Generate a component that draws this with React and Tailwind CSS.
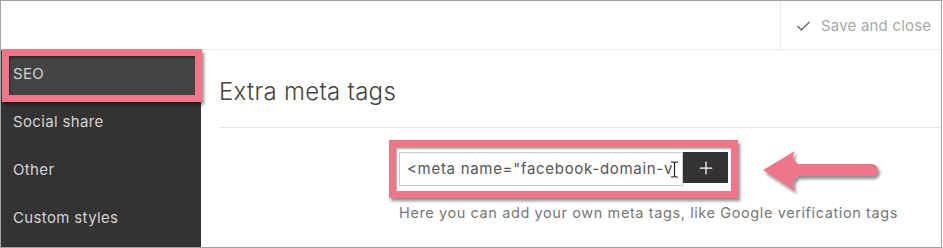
import { Check, Plus } from "lucide-react";

const MENU = ["SEO", "Social share", "Other", "Custom styles"];

function Arrow() {
  return (
    <svg width="124" height="50" viewBox="0 0 124 50" className="absolute left-[760px] top-[148px]">
      <defs>
        <filter id="sh" x="-10%" y="-20%" width="130%" height="150%">
          <feDropShadow dx="2" dy="3" stdDeviation="1.4" floodColor="#000" floodOpacity="0.45" />
        </filter>
      </defs>
      <path
        d="M2 21 L34 2 Q29 10 37 15 L111 15 A6 6 0 0 1 111 27 L37 27 Q29 32 34 42 Z"
        fill="#ef7589"
        filter="url(#sh)"
      />
    </svg>
  );
}

function IBeam() {
  return (
    <svg width="9" height="17" viewBox="0 0 9 17" className="absolute left-[270px] top-[8px]">
      <path d="M1 1 H3.5 L4.5 2 L5.5 1 H8 M4.5 2 V15 M1 16 H3.5 L4.5 15 L5.5 16 H8" stroke="#fff" strokeWidth="3" fill="none" />
      <path d="M1 1 H3.5 L4.5 2 L5.5 1 H8 M4.5 2 V15 M1 16 H3.5 L4.5 15 L5.5 16 H8" stroke="#222" strokeWidth="1.2" fill="none" />
    </svg>
  );
}

export default function App() {
  return (
    <div className="relative w-[942px] h-[248px] border border-[#a3a3a3] bg-white overflow-hidden flex flex-col" style={{ fontFamily: "Inter, 'Noto Sans', sans-serif" }}>
      {/* Top bar */}
      <div className="h-[49px] shrink-0 border-b border-[#ececec] flex justify-end">
        <button className="w-[161px] border-l border-[#ececec] flex items-center gap-[9px] pl-[14px] pt-[2px] text-[15px] tracking-[0.2px] text-[#a9a9a9]">
          <Check className="w-[17px] h-[17px] text-[#666]" strokeWidth={1.8} />
          <span>Save and close</span>
        </button>
      </div>

      <div className="flex flex-1">
        {/* Sidebar */}
        <div className="w-[200px] bg-[#333] flex flex-col">
          {MENU.map((m, i) => (
            <div
              key={m}
              className={`h-[48px] shrink-0 flex items-center pl-[12px] text-[15px] tracking-[0.35px] text-[#d2d2d2] ${i === 0 ? "bg-[#444]" : ""}`}
            >
              {m}
            </div>
          ))}
        </div>

        {/* Main */}
        <div className="flex-1">
          <div className="ml-[18px] h-[78px] border-b border-[#e6e6e6] flex items-center pt-[6px]">
            <h1 className="text-[24px] text-[#444] font-light tracking-[0.3px]">Extra meta tags</h1>
          </div>
          <div className="pl-[198px] pt-[24px]">
            <div className="flex items-start">
              <div className="relative w-[284px] h-[34px] border border-[#cdcdcd] flex items-center pl-[7px] pr-[10px] overflow-hidden">
                <span className="whitespace-nowrap text-[15px] tracking-[0.7px] text-[#555]">&lt;meta name="facebook-domain-verification" /&gt;</span>
                <div className="absolute right-0 top-0 bottom-0 w-[10px] bg-white" />
                <IBeam />
              </div>
              <button className="w-[45px] h-[31px] bg-[#333] flex items-center justify-center">
                <Plus className="w-[20px] h-[20px] text-white" strokeWidth={1.5} />
              </button>
            </div>
            <p className="mt-[16px] text-[14.5px] tracking-[0.6px] text-[#777] whitespace-nowrap">Here you can add your own meta tags, like Google verification tags</p>
          </div>
        </div>
      </div>

      {/* Annotations */}
      <div className="absolute left-[1px] top-[48px] w-[200px] h-[53px] border-[7px] border-[#ef7589] shadow-[2px_3px_3px_rgba(0,0,0,0.45),inset_1px_2px_2px_rgba(0,0,0,0.35)]" />
      <div className="absolute left-[388px] top-[139px] w-[349px] h-[58px] border-[7px] border-[#ef7589] shadow-[2px_3px_3px_rgba(0,0,0,0.45),inset_1px_2px_2px_rgba(0,0,0,0.35)]" />
      <Arrow />
    </div>
  );
}
